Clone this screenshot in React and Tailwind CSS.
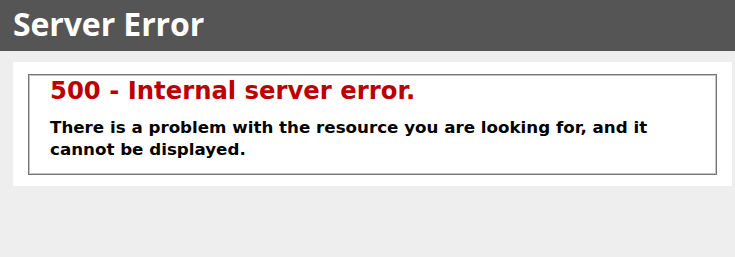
import React from 'react'

const App = () => {
    return (
        <div className="min-h-[257px] bg-[#eeeeee] font-['DejaVu_Sans',Verdana,sans-serif]">
            <div className="h-[51px] bg-[#555555] pl-[13px] flex items-center">
                <h1 className="font-['Open_Sans',sans-serif] font-bold text-[32px] text-white leading-none tracking-[-0.1px] -mt-[3px]">
                    Server Error
                </h1>
            </div>

            <div className="ml-[13px] mt-[11px] w-[719px] bg-white pt-[12px] pb-[11px] pl-[15px] pr-[15px]">
                <div className="border border-[#767676] shadow-[inset_0_0_0_1px_#c4c4c4] h-[101px] pl-[21px] pt-[1px]">
                    <h2 className="font-bold text-[24.3px] leading-[30px] text-[#bb0000]">
                        500 - Internal server error.
                    </h2>
                    <h3 className="mt-[10px] font-bold text-[16.7px] leading-[22px] text-black w-[640px]">
                        There is a problem with the resource you are looking for, and it cannot be displayed.
                    </h3>
                </div>
            </div>
        </div>
    )
}

export default App
